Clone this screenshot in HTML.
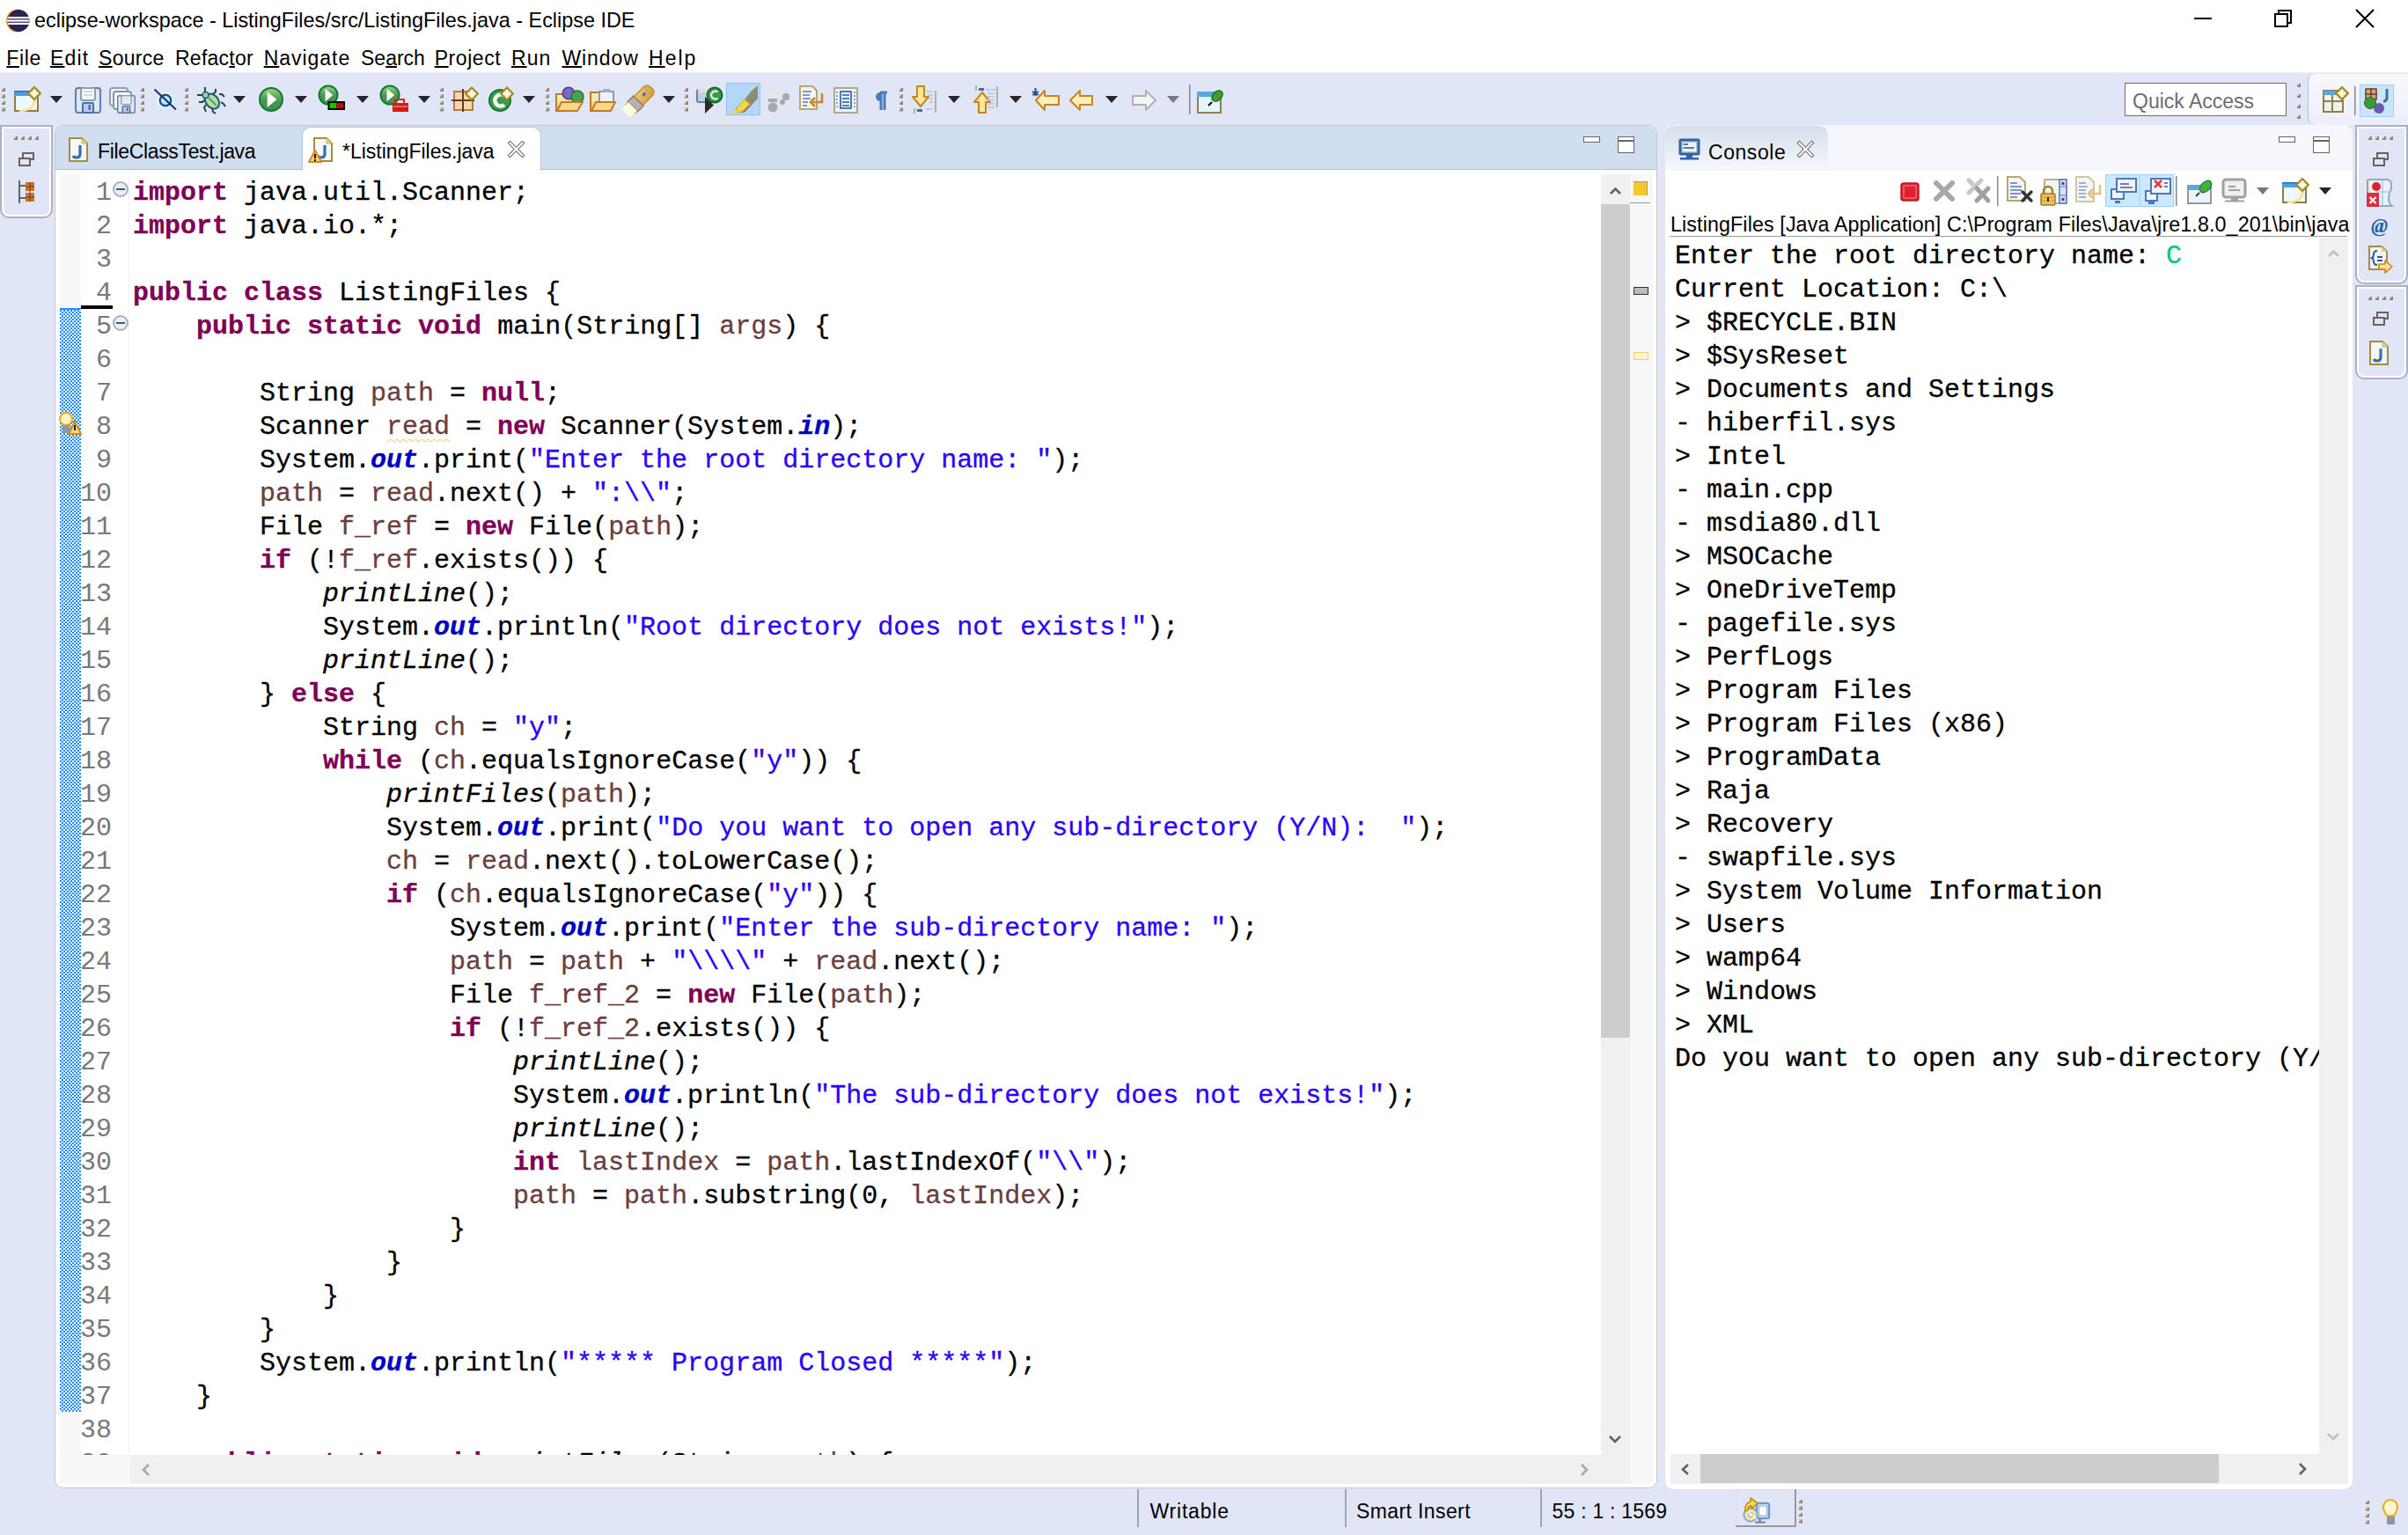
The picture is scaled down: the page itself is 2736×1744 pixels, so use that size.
<!DOCTYPE html>
<html><head><meta charset="utf-8">
<style>
*{margin:0;padding:0;box-sizing:border-box}
html,body{width:2736px;height:1744px;overflow:hidden;background:#e1e6f6;font-family:"Liberation Sans",sans-serif;color:#000}
.a{position:absolute}
.ui{font-family:"Liberation Sans",sans-serif;font-size:23px;line-height:28px;white-space:pre;position:absolute}
.cl{position:absolute;left:0;white-space:pre;font-family:"Liberation Mono",monospace;font-size:30px;line-height:38px;height:38px;color:#000;-webkit-text-stroke:0.3px currentColor}
.k{color:#7f0055;font-weight:bold}
.s{color:#2a00ff}
.f{color:#0000c0;font-weight:bold;font-style:italic}
.v{color:#6a3e3e}
i{font-style:italic}
.w{text-decoration:underline wavy #f4c82d;text-decoration-thickness:1px;text-underline-offset:5px}
.ln{position:absolute;right:0;white-space:pre;font-family:"Liberation Mono",monospace;font-size:30px;line-height:38px;color:#787878}
.drop{position:absolute;width:0;height:0;border-left:7px solid transparent;border-right:7px solid transparent;border-top:8px solid #222}
.dots{position:absolute;width:4px;height:26px;background:repeating-linear-gradient(#8a8372 0 4px,transparent 4px 8px)}
</style></head><body>

<div class="a" style="left:0;top:0;width:2736px;height:82px;background:#fff"></div>
<div class="a" style="left:0;top:82px;width:2736px;height:1px;background:#f0f0f0"></div>
<svg class="a" style="left:6px;top:10px" width="28" height="27" viewBox="0 0 28 27">
<circle cx="14" cy="13.5" r="13" fill="#f7941e"/><circle cx="15" cy="13.5" r="12.5" fill="#2c2255"/>
<rect x="3" y="9" width="24" height="2.2" fill="#fff"/><rect x="2" y="12.4" width="25" height="2.2" fill="#fff"/><rect x="3" y="15.8" width="24" height="2.2" fill="#fff"/>
</svg>
<div class="ui" style="left:39px;top:9px;font-size:23.4px">eclipse-workspace - ListingFiles/src/ListingFiles.java - Eclipse IDE</div>
<div class="a" style="left:2493px;top:20px;width:20px;height:2px;background:#000"></div>
<div class="a" style="left:2588px;top:11px;width:16px;height:16px;border:2px solid #000"></div>
<div class="a" style="left:2584px;top:15px;width:16px;height:16px;border:2px solid #000;background:#fff"></div>
<svg class="a" style="left:2676px;top:10px" width="22" height="22"><path d="M1 1L21 21M21 1L1 21" stroke="#000" stroke-width="2"/></svg>
<div class="ui" style="left:7.3px;top:52px;letter-spacing:0.67px"><span style="text-decoration:underline;text-underline-offset:1px;text-decoration-thickness:1.5px">F</span>ile</div>
<div class="ui" style="left:57.0px;top:52px;letter-spacing:1.20px"><span style="text-decoration:underline;text-underline-offset:1px;text-decoration-thickness:1.5px">E</span>dit</div>
<div class="ui" style="left:112.0px;top:52px;letter-spacing:0.28px"><span style="text-decoration:underline;text-underline-offset:1px;text-decoration-thickness:1.5px">S</span>ource</div>
<div class="ui" style="left:199.0px;top:52px;letter-spacing:0.24px">Refac<span style="text-decoration:underline;text-underline-offset:1px;text-decoration-thickness:1.5px">t</span>or</div>
<div class="ui" style="left:299.7px;top:52px;letter-spacing:0.97px"><span style="text-decoration:underline;text-underline-offset:1px;text-decoration-thickness:1.5px">N</span>avigate</div>
<div class="ui" style="left:410.0px;top:52px;letter-spacing:0.00px">Se<span style="text-decoration:underline;text-underline-offset:1px;text-decoration-thickness:1.5px">a</span>rch</div>
<div class="ui" style="left:493.7px;top:52px;letter-spacing:0.55px"><span style="text-decoration:underline;text-underline-offset:1px;text-decoration-thickness:1.5px">P</span>roject</div>
<div class="ui" style="left:581.0px;top:52px;letter-spacing:1.00px"><span style="text-decoration:underline;text-underline-offset:1px;text-decoration-thickness:1.5px">R</span>un</div>
<div class="ui" style="left:638.5px;top:52px;letter-spacing:0.90px"><span style="text-decoration:underline;text-underline-offset:1px;text-decoration-thickness:1.5px">W</span>indow</div>
<div class="ui" style="left:737.0px;top:52px;letter-spacing:2.00px"><span style="text-decoration:underline;text-underline-offset:1px;text-decoration-thickness:1.5px">H</span>elp</div>
<div class="a" style="left:62px;top:142px;width:1821px;height:1549px;background:#fff;border:1px solid #c6c6c6;border-radius:10px 10px 10px 10px"></div>
<div class="a" style="left:63px;top:143px;width:1819px;height:50px;background:#cfdff0;border-radius:9px 9px 0 0;border-bottom:1.5px solid #b3bccd"></div>
<div class="a" style="left:343px;top:144px;width:272px;height:50px;background:#fff;border-radius:10px 10px 0 0;border:1px solid #b8c6dc;border-bottom:none"></div>
<div class="ui" style="left:111px;top:158px;letter-spacing:-0.34px">FileClassTest.java</div>
<div class="ui" style="left:389px;top:158px">*ListingFiles.java</div>
<div class="a" style="left:68px;top:198px;width:24px;height:1455px;background:#f8f8f8"></div>
<div class="a" style="left:68px;top:350px;width:24px;height:1254px;background:conic-gradient(#1a8cff 25%,#fff 0 50%,#1a8cff 0 75%,#fff 0) 0 0/4px 4px"></div>
<div class="a" style="left:68px;top:350px;width:24px;height:2px;background:#1e90ff"></div>
<div class="a" style="left:92px;top:347px;width:36px;height:4px;background:#000"></div>
<div class="a" style="left:146px;top:198px;width:1px;height:1455px;background:#f2f2f2"></div>
<div class="a" style="left:92px;top:200px;width:35px;height:1453px;overflow:hidden"><div class="ln" style="top:0px">1</div><div class="ln" style="top:38px">2</div><div class="ln" style="top:76px">3</div><div class="ln" style="top:114px">4</div><div class="ln" style="top:152px">5</div><div class="ln" style="top:190px">6</div><div class="ln" style="top:228px">7</div><div class="ln" style="top:266px">8</div><div class="ln" style="top:304px">9</div><div class="ln" style="top:342px">10</div><div class="ln" style="top:380px">11</div><div class="ln" style="top:418px">12</div><div class="ln" style="top:456px">13</div><div class="ln" style="top:494px">14</div><div class="ln" style="top:532px">15</div><div class="ln" style="top:570px">16</div><div class="ln" style="top:608px">17</div><div class="ln" style="top:646px">18</div><div class="ln" style="top:684px">19</div><div class="ln" style="top:722px">20</div><div class="ln" style="top:760px">21</div><div class="ln" style="top:798px">22</div><div class="ln" style="top:836px">23</div><div class="ln" style="top:874px">24</div><div class="ln" style="top:912px">25</div><div class="ln" style="top:950px">26</div><div class="ln" style="top:988px">27</div><div class="ln" style="top:1026px">28</div><div class="ln" style="top:1064px">29</div><div class="ln" style="top:1102px">30</div><div class="ln" style="top:1140px">31</div><div class="ln" style="top:1178px">32</div><div class="ln" style="top:1216px">33</div><div class="ln" style="top:1254px">34</div><div class="ln" style="top:1292px">35</div><div class="ln" style="top:1330px">36</div><div class="ln" style="top:1368px">37</div><div class="ln" style="top:1406px">38</div><div class="ln" style="top:1444px">39</div></div>
<div class="a" style="left:151px;top:200px;width:1667px;height:1453px;overflow:hidden"><div class="cl" style="top:0px"><span class="k">import</span> java.util.Scanner;</div><div class="cl" style="top:38px"><span class="k">import</span> java.io.*;</div><div class="cl" style="top:76px"></div><div class="cl" style="top:114px"><span class="k">public</span> <span class="k">class</span> ListingFiles {</div><div class="cl" style="top:152px">    <span class="k">public</span> <span class="k">static</span> <span class="k">void</span> main(String[] <span class="v">args</span>) {</div><div class="cl" style="top:190px"></div><div class="cl" style="top:228px">        String <span class="v">path</span> = <span class="k">null</span>;</div><div class="cl" style="top:266px">        Scanner <span class="v w">read</span> = <span class="k">new</span> Scanner(System.<span class="f">in</span>);</div><div class="cl" style="top:304px">        System.<span class="f">out</span>.print(<span class="s">&quot;Enter the root directory name: &quot;</span>);</div><div class="cl" style="top:342px">        <span class="v">path</span> = <span class="v">read</span>.next() + <span class="s">&quot;:\\&quot;</span>;</div><div class="cl" style="top:380px">        File <span class="v">f_ref</span> = <span class="k">new</span> File(<span class="v">path</span>);</div><div class="cl" style="top:418px">        <span class="k">if</span> (!<span class="v">f_ref</span>.exists()) {</div><div class="cl" style="top:456px">            <i>printLine</i>();</div><div class="cl" style="top:494px">            System.<span class="f">out</span>.println(<span class="s">&quot;Root directory does not exists!&quot;</span>);</div><div class="cl" style="top:532px">            <i>printLine</i>();</div><div class="cl" style="top:570px">        } <span class="k">else</span> {</div><div class="cl" style="top:608px">            String <span class="v">ch</span> = <span class="s">&quot;y&quot;</span>;</div><div class="cl" style="top:646px">            <span class="k">while</span> (<span class="v">ch</span>.equalsIgnoreCase(<span class="s">&quot;y&quot;</span>)) {</div><div class="cl" style="top:684px">                <i>printFiles</i>(<span class="v">path</span>);</div><div class="cl" style="top:722px">                System.<span class="f">out</span>.print(<span class="s">&quot;Do you want to open any sub-directory (Y/N):  &quot;</span>);</div><div class="cl" style="top:760px">                <span class="v">ch</span> = <span class="v">read</span>.next().toLowerCase();</div><div class="cl" style="top:798px">                <span class="k">if</span> (<span class="v">ch</span>.equalsIgnoreCase(<span class="s">&quot;y&quot;</span>)) {</div><div class="cl" style="top:836px">                    System.<span class="f">out</span>.print(<span class="s">&quot;Enter the sub-directory name: &quot;</span>);</div><div class="cl" style="top:874px">                    <span class="v">path</span> = <span class="v">path</span> + <span class="s">&quot;\\\\&quot;</span> + <span class="v">read</span>.next();</div><div class="cl" style="top:912px">                    File <span class="v">f_ref_2</span> = <span class="k">new</span> File(<span class="v">path</span>);</div><div class="cl" style="top:950px">                    <span class="k">if</span> (!<span class="v">f_ref_2</span>.exists()) {</div><div class="cl" style="top:988px">                        <i>printLine</i>();</div><div class="cl" style="top:1026px">                        System.<span class="f">out</span>.println(<span class="s">&quot;The sub-directory does not exists!&quot;</span>);</div><div class="cl" style="top:1064px">                        <i>printLine</i>();</div><div class="cl" style="top:1102px">                        <span class="k">int</span> <span class="v">lastIndex</span> = <span class="v">path</span>.lastIndexOf(<span class="s">&quot;\\&quot;</span>);</div><div class="cl" style="top:1140px">                        <span class="v">path</span> = <span class="v">path</span>.substring(0, <span class="v">lastIndex</span>);</div><div class="cl" style="top:1178px">                    }</div><div class="cl" style="top:1216px">                }</div><div class="cl" style="top:1254px">            }</div><div class="cl" style="top:1292px">        }</div><div class="cl" style="top:1330px">        System.<span class="f">out</span>.println(<span class="s">&quot;***** Program Closed *****&quot;</span>);</div><div class="cl" style="top:1368px">    }</div><div class="cl" style="top:1406px"></div><div class="cl" style="top:1444px">    <span class="k">public</span> <span class="k">static</span> <span class="k">void</span> <i>printFiles</i>(String <span class="v">path</span>) {</div></div>
<div class="a" style="left:1819px;top:198px;width:33px;height:1455px;background:#f0f0f0"></div>
<div class="a" style="left:1819px;top:232px;width:33px;height:947px;background:#cdcdcd"></div>
<div class="a" style="left:1852px;top:198px;width:26px;height:1488px;background:#f7f7f7"></div>
<div class="a" style="left:1856px;top:206px;width:16px;height:16px;background:#f4c82d;border-top:1px solid #999;border-right:1px solid #999"></div>
<div class="a" style="left:1852px;top:230px;width:23px;height:1px;background:#999"></div>
<div class="a" style="left:1856px;top:326px;width:17px;height:9px;background:#bbb;border:1px solid #333"></div>
<div class="a" style="left:1856px;top:400px;width:17px;height:9px;background:#fcf1d3;border:1px solid #f5cf5c"></div>
<div class="a" style="left:68px;top:1653px;width:80px;height:33px;background:#f7f7f7"></div>
<div class="a" style="left:148px;top:1653px;width:1671px;height:33px;background:#f0f0f0"></div>
<div class="a" style="left:1819px;top:1653px;width:33px;height:33px;background:#f0f0f0"></div>
<div class="a" style="left:1892px;top:142px;width:781px;height:1550px;background:#fff;border-radius:10px"></div>
<div class="a" style="left:1892px;top:142px;width:781px;height:52px;background:#f5f7fc;border-radius:10px 10px 0 0"></div>
<div class="a" style="left:1892px;top:143px;width:185px;height:51px;background:linear-gradient(#d5dfeb,#f6f8fc);border-radius:10px 10px 0 0"></div>
<div class="ui" style="left:1941px;top:158.5px;letter-spacing:0.55px">Console</div>
<div class="ui" style="left:1898px;top:241px;font-size:23.3px;letter-spacing:0.1px">ListingFiles [Java Application] C:\Program Files\Java\jre1.8.0_201\bin\java</div>
<div class="a" style="left:1897px;top:268px;width:770px;height:1px;background:#a0a0a0"></div>
<div class="a" style="left:1903px;top:272px;width:732px;height:1380px;overflow:hidden"><div class="cl" style="top:0px">Enter the root directory name: <span style="color:#00c87d">C</span></div><div class="cl" style="top:38px">Current Location: C:\</div><div class="cl" style="top:76px">&gt; $RECYCLE.BIN</div><div class="cl" style="top:114px">&gt; $SysReset</div><div class="cl" style="top:152px">&gt; Documents and Settings</div><div class="cl" style="top:190px">- hiberfil.sys</div><div class="cl" style="top:228px">&gt; Intel</div><div class="cl" style="top:266px">- main.cpp</div><div class="cl" style="top:304px">- msdia80.dll</div><div class="cl" style="top:342px">&gt; MSOCache</div><div class="cl" style="top:380px">&gt; OneDriveTemp</div><div class="cl" style="top:418px">- pagefile.sys</div><div class="cl" style="top:456px">&gt; PerfLogs</div><div class="cl" style="top:494px">&gt; Program Files</div><div class="cl" style="top:532px">&gt; Program Files (x86)</div><div class="cl" style="top:570px">&gt; ProgramData</div><div class="cl" style="top:608px">&gt; Raja</div><div class="cl" style="top:646px">&gt; Recovery</div><div class="cl" style="top:684px">- swapfile.sys</div><div class="cl" style="top:722px">&gt; System Volume Information</div><div class="cl" style="top:760px">&gt; Users</div><div class="cl" style="top:798px">&gt; wamp64</div><div class="cl" style="top:836px">&gt; Windows</div><div class="cl" style="top:874px">&gt; XML</div><div class="cl" style="top:912px">Do you want to open any sub-directory (Y/N):  </div></div>
<div class="a" style="left:2635px;top:270px;width:33px;height:1383px;background:#f0f0f0"></div>
<div class="a" style="left:1898px;top:1652px;width:770px;height:34px;background:#f0f0f0"></div>
<div class="a" style="left:1932px;top:1652px;width:589px;height:33px;background:#cdcdcd"></div>
<div class="a" style="left:0;top:142px;width:60px;height:106px;border:2px solid #a9b1c6;border-left-width:2px;border-radius:0 0 10px 10px;background:#e1e6f6;box-shadow:inset 0 0 0 2px #fff"></div>
<div class="a" style="left:2676px;top:142px;width:60px;height:181px;border:2px solid #a9b1c6;border-radius:0 0 10px 10px;box-shadow:inset 0 0 0 2px #fff"></div>
<div class="a" style="left:2676px;top:324px;width:60px;height:107px;border:2px solid #a9b1c6;border-radius:0 0 10px 10px;box-shadow:inset 0 0 0 2px #fff"></div>
<div class="a" style="left:2414px;top:94px;width:184px;height:38px;background:#fff;border:1.5px solid #6e6e6e"></div>
<div class="a" style="left:2622px;top:84px;width:120px;height:58px;background:linear-gradient(#f6f8fd,#eceffa);border-left:1.5px solid #b8c0d2;border-radius:8px 0 0 8px"></div>
<div class="ui" style="left:2423px;top:101px;color:#6d6d6d">Quick Access</div>
<div class="a" style="left:1292px;top:1692px;width:2px;height:43px;background:#a0a4b0"></div>
<div class="a" style="left:1528px;top:1692px;width:2px;height:43px;background:#a0a4b0"></div>
<div class="a" style="left:1750px;top:1692px;width:2px;height:43px;background:#a0a4b0"></div>
<div class="ui" style="left:1306.5px;top:1702.5px;letter-spacing:0.79px">Writable</div>
<div class="ui" style="left:1541px;top:1702.5px;letter-spacing:0.39px">Smart Insert</div>
<div class="ui" style="left:1763.5px;top:1702.5px;letter-spacing:0.23px">55 : 1 : 1569</div>
<div class="a" style="left:1799px;top:155px;width:19px;height:7px;border:1.5px solid #666;background:#fff"></div>
<div class="a" style="left:1838px;top:155px;width:19px;height:19px;border:1.5px solid #666;background:#fff"></div>
<div class="a" style="left:1838px;top:159px;width:19px;height:1.5px;background:#666"></div>
<div class="a" style="left:2589px;top:155px;width:19px;height:7px;border:1.5px solid #666;background:#fff"></div>
<div class="a" style="left:2628px;top:155px;width:19px;height:19px;border:1.5px solid #666;background:#fff"></div>
<div class="a" style="left:2628px;top:159px;width:19px;height:1.5px;background:#666"></div>
<svg class="a" style="left:0;top:0" width="2736" height="1744"><defs>
<linearGradient id="gplay" x1="0" y1="0" x2="0" y2="1"><stop offset="0" stop-color="#9ad77f"/><stop offset="0.5" stop-color="#4a9a52"/><stop offset="1" stop-color="#3d8f4a"/></linearGradient>
<linearGradient id="fold" x1="0" y1="0" x2="0" y2="1"><stop offset="0" stop-color="#fff3c4"/><stop offset="1" stop-color="#f2c66a"/></linearGradient>
<linearGradient id="pen" x1="0" y1="0" x2="1" y2="1"><stop offset="0" stop-color="#f6d68a"/><stop offset="1" stop-color="#d29a3a"/></linearGradient>
</defs>
<rect x="2.0" y="100.0" width="4" height="4" fill="#8d8672"/><rect x="2.0" y="100.0" width="2" height="2" fill="#d8d2c0"/><rect x="2.0" y="107.5" width="4" height="4" fill="#8d8672"/><rect x="2.0" y="107.5" width="2" height="2" fill="#d8d2c0"/><rect x="2.0" y="115.0" width="4" height="4" fill="#8d8672"/><rect x="2.0" y="115.0" width="2" height="2" fill="#d8d2c0"/><rect x="2.0" y="122.5" width="4" height="4" fill="#8d8672"/><rect x="2.0" y="122.5" width="2" height="2" fill="#d8d2c0"/>
<rect x="17" y="104" width="26" height="22" fill="#eef8ff" stroke="#8f7d48" stroke-width="2"/><rect x="16" y="103" width="28" height="6" fill="#4aa3df"/><rect x="16" y="103" width="28" height="1.5" fill="#2f6fb5"/><path d="M22 126Q41 125 39 111" stroke="#f7e39a" stroke-width="3" fill="none"/><path d="M39 99L46 106L39 113L32 106Z" fill="#f3e3a8" stroke="#a4861f" stroke-width="2"/><path d="M39 102V110M35 106H43" stroke="#fff" stroke-width="2"/>
<path d="M57.0 109.0L71.0 109.0L64.0 117.0Z" fill="#262626"/>
<g transform="translate(85,99) scale(1.0)"><rect x="1" y="1" width="28" height="28" rx="3" fill="#dfe8f2" stroke="#5b7fb0" stroke-width="2"/><rect x="7" y="1" width="16" height="14" rx="2" fill="#f4f7fa" stroke="#8fa0a8" stroke-width="2"/><path d="M10 5H20M10 9H20" stroke="#c8d2d8" stroke-width="1.5"/><rect x="9" y="18" width="12" height="11" rx="1.5" fill="#b8cde8" stroke="#4b6fa8" stroke-width="2"/><rect x="15.5" y="20" width="2.5" height="6" fill="#4b6fa8"/></g>
<g transform="translate(124,99)"><rect x="1" y="1" width="20" height="20" rx="3" fill="#f4f7fa" stroke="#8fa0b8" stroke-width="2"/><rect x="5" y="5" width="20" height="20" rx="3" fill="#f4f7fa" stroke="#7f95b5" stroke-width="2"/></g>
<g transform="translate(133,108) scale(0.7)"><rect x="1" y="1" width="28" height="28" rx="3" fill="#dfe8f2" stroke="#5b7fb0" stroke-width="2"/><rect x="7" y="1" width="16" height="14" rx="2" fill="#f4f7fa" stroke="#8fa0a8" stroke-width="2"/><path d="M10 5H20M10 9H20" stroke="#c8d2d8" stroke-width="1.5"/><rect x="9" y="18" width="12" height="11" rx="1.5" fill="#b8cde8" stroke="#4b6fa8" stroke-width="2"/><rect x="15.5" y="20" width="2.5" height="6" fill="#4b6fa8"/></g>
<rect x="160.0" y="100.0" width="4" height="4" fill="#8d8672"/><rect x="160.0" y="100.0" width="2" height="2" fill="#d8d2c0"/><rect x="160.0" y="107.5" width="4" height="4" fill="#8d8672"/><rect x="160.0" y="107.5" width="2" height="2" fill="#d8d2c0"/><rect x="160.0" y="115.0" width="4" height="4" fill="#8d8672"/><rect x="160.0" y="115.0" width="2" height="2" fill="#d8d2c0"/><rect x="160.0" y="122.5" width="4" height="4" fill="#8d8672"/><rect x="160.0" y="122.5" width="2" height="2" fill="#d8d2c0"/>
<circle cx="188" cy="114" r="9" fill="#fff"/><circle cx="188" cy="114" r="6.3" fill="#c6e2ef" stroke="#0b5a8c" stroke-width="2.4"/><path d="M175.5 101.5L200 124.5" stroke="#1b2a80" stroke-width="2"/>
<rect x="210.0" y="100.0" width="4" height="4" fill="#8d8672"/><rect x="210.0" y="100.0" width="2" height="2" fill="#d8d2c0"/><rect x="210.0" y="107.5" width="4" height="4" fill="#8d8672"/><rect x="210.0" y="107.5" width="2" height="2" fill="#d8d2c0"/><rect x="210.0" y="115.0" width="4" height="4" fill="#8d8672"/><rect x="210.0" y="115.0" width="2" height="2" fill="#d8d2c0"/><rect x="210.0" y="122.5" width="4" height="4" fill="#8d8672"/><rect x="210.0" y="122.5" width="2" height="2" fill="#d8d2c0"/>
<g stroke="#1f4a3b" stroke-width="2" fill="none"><path d="M233 99V106M245 101V104L241 108M224 108H232M226 116L230 116L233 113M249 107L252 107L255 110M251 116L254 118L256 121M234 119L232 122L234 127M241 123L242 127L245 129"/></g><ellipse cx="241" cy="115" rx="7" ry="9.5" transform="rotate(-40 241 115)" fill="#b8dca8" stroke="#1b5e6e" stroke-width="2"/><circle cx="233.5" cy="108" r="3.5" fill="#a8d0b0" stroke="#1b5e6e" stroke-width="1.6"/><path d="M237 111L246 120" stroke="#5aa65a" stroke-width="2"/>
<path d="M265.0 109.0L279.0 109.0L272.0 117.0Z" fill="#262626"/>
<circle cx="308" cy="113" r="13" fill="url(#gplay)" stroke="#0e7a32" stroke-width="2"/><path d="M303.71 104.16L303.71 122.1L314.5 113Z" fill="#fff"/>
<path d="M335.0 109.0L349.0 109.0L342.0 117.0Z" fill="#262626"/>
<circle cx="373" cy="108" r="10.5" fill="url(#gplay)" stroke="#0e7a32" stroke-width="2"/><path d="M369.535 100.86L369.535 115.35L378.25 108Z" fill="#fff"/>
<rect x="372.5" y="115" width="19.5" height="10" fill="#000"/><rect x="374.5" y="117" width="8" height="6" fill="#00c800"/><rect x="382.5" y="117" width="7.5" height="6" fill="#d00000"/>
<path d="M405.0 109.0L419.0 109.0L412.0 117.0Z" fill="#262626"/>
<circle cx="443" cy="108" r="10.5" fill="url(#gplay)" stroke="#0e7a32" stroke-width="2"/><path d="M439.535 100.86L439.535 115.35L448.25 108Z" fill="#fff"/>
<rect x="449" y="113" width="10" height="5" fill="none" stroke="#e82020" stroke-width="2"/><rect x="446" y="117" width="18" height="10" fill="#d81818"/><path d="M447 121H463" stroke="#f08080" stroke-width="1.5"/>
<path d="M475.0 109.0L489.0 109.0L482.0 117.0Z" fill="#262626"/>
<rect x="500.0" y="100.0" width="4" height="4" fill="#8d8672"/><rect x="500.0" y="100.0" width="2" height="2" fill="#d8d2c0"/><rect x="500.0" y="107.5" width="4" height="4" fill="#8d8672"/><rect x="500.0" y="107.5" width="2" height="2" fill="#d8d2c0"/><rect x="500.0" y="115.0" width="4" height="4" fill="#8d8672"/><rect x="500.0" y="115.0" width="2" height="2" fill="#d8d2c0"/><rect x="500.0" y="122.5" width="4" height="4" fill="#8d8672"/><rect x="500.0" y="122.5" width="2" height="2" fill="#d8d2c0"/>
<rect x="516" y="104" width="21" height="21" fill="#f2dba6" stroke="#b47a52" stroke-width="2"/><path d="M526 101V127M513 114H539" stroke="#6a3a28" stroke-width="2"/>
<path d="M536 99.5L543 106.5L536 113.5L529 106.5Z" fill="#f3e3a8" stroke="#a4861f" stroke-width="2"/><path d="M536 102.5V110.5M532 106.5H540" stroke="#fff" stroke-width="2"/>
<circle cx="568" cy="114" r="12" fill="#3a9a4a" stroke="#137a30" stroke-width="2"/><path d="M573 109A6.5 6.5 0 1 0 573 119" stroke="#fff" stroke-width="4.5" fill="none"/>
<path d="M576 99.5L583 106.5L576 113.5L569 106.5Z" fill="#f3e3a8" stroke="#a4861f" stroke-width="2"/><path d="M576 102.5V110.5M572 106.5H580" stroke="#fff" stroke-width="2"/>
<path d="M594.0 109.0L608.0 109.0L601.0 117.0Z" fill="#262626"/>
<rect x="620.0" y="100.0" width="4" height="4" fill="#8d8672"/><rect x="620.0" y="100.0" width="2" height="2" fill="#d8d2c0"/><rect x="620.0" y="107.5" width="4" height="4" fill="#8d8672"/><rect x="620.0" y="107.5" width="2" height="2" fill="#d8d2c0"/><rect x="620.0" y="115.0" width="4" height="4" fill="#8d8672"/><rect x="620.0" y="115.0" width="2" height="2" fill="#d8d2c0"/><rect x="620.0" y="122.5" width="4" height="4" fill="#8d8672"/><rect x="620.0" y="122.5" width="2" height="2" fill="#d8d2c0"/>
<path d="M632 107H642L644 110H652V126H632Z" fill="url(#fold)" stroke="#c07a28" stroke-width="2"/>
<circle cx="646" cy="106" r="6.8" fill="#7a6ac0" stroke="#4a3a98" stroke-width="1.5"/><circle cx="656" cy="110" r="7" fill="#4aa050" stroke="#1a7a2a" stroke-width="1.5"/>
<path d="M633 126L638 116H662L656 126Z" fill="#f8d98a" stroke="#c07a28" stroke-width="2"/>
<path d="M671 105H681L683 108H690V126H671Z" fill="url(#fold)" stroke="#c07a28" stroke-width="2"/><rect x="681" y="104" width="16" height="13" fill="#eef2fa" stroke="#8a9ab0" stroke-width="2"/><rect x="685" y="101" width="8" height="4" fill="#9ab0c8"/><path d="M672 126L677 116H699L694 126Z" fill="#f8d98a" stroke="#c07a28" stroke-width="2"/>
<g transform="rotate(-45 726 114)"><rect x="708" y="107" width="38" height="14" rx="5" fill="url(#pen)" stroke="#c88a2a" stroke-width="1.5"/><rect x="740" y="109" width="5" height="10" rx="2" fill="none" stroke="#c8a060" stroke-width="1.5"/><rect x="716" y="106" width="9" height="16" fill="#b8b0b8" stroke="#9a7a48" stroke-width="1.5"/><rect x="705" y="107" width="11" height="14" fill="#fffbe0"/><rect x="733" y="112" width="4" height="2.5" fill="#3060b0"/></g>
<path d="M753.0 109.0L767.0 109.0L760.0 117.0Z" fill="#262626"/>
<rect x="778.0" y="100.0" width="4" height="4" fill="#8d8672"/><rect x="778.0" y="100.0" width="2" height="2" fill="#d8d2c0"/><rect x="778.0" y="107.5" width="4" height="4" fill="#8d8672"/><rect x="778.0" y="107.5" width="2" height="2" fill="#d8d2c0"/><rect x="778.0" y="115.0" width="4" height="4" fill="#8d8672"/><rect x="778.0" y="115.0" width="2" height="2" fill="#d8d2c0"/><rect x="778.0" y="122.5" width="4" height="4" fill="#8d8672"/><rect x="778.0" y="122.5" width="2" height="2" fill="#d8d2c0"/>
<rect x="792" y="102" width="15" height="14" rx="2" fill="#b8d4ec" stroke="#7a7aa0" stroke-width="2"/><rect x="793" y="101" width="13" height="4" fill="#f0d8c8"/><path d="M801 110V129L811 119.5Z" fill="#2a2a2a"/><circle cx="812" cy="108" r="8.5" fill="#3a9a4a" stroke="#0e6a28" stroke-width="2"/><path d="M815.5 104.5A4.5 4.5 0 1 0 815.5 111.5" stroke="#fff" stroke-width="2.2" fill="none"/>
<rect x="825.5" y="94.5" width="38" height="36" fill="#b3d7f7" stroke="#8cc4f5" stroke-width="1"/>
<path d="M838 124L853 104L861 97V112L846 128H838Z" fill="#8f8a72"/><path d="M837 123L846 113L852 118L843 127Q838 129 836 127Z" fill="#f3d648" stroke="#c9a820" stroke-width="1"/><path d="M829 127H838" stroke="#f3d648" stroke-width="2"/>
<g fill="#a8a8a8"><rect x="872" y="102" width="11" height="8" rx="3" fill="#e8e8e8"/><circle cx="878" cy="122" r="5.5"/><rect x="873" y="112" width="10" height="4"/><circle cx="893" cy="110" r="4"/><circle cx="889" cy="116" r="3"/></g>
<path d="M909 98H923L928 103V124H909Z" fill="#f2f5fb" stroke="#b8a870" stroke-width="2"/><path d="M912 104H922M912 108H920M912 112H921M912 116H918M912 120H917" stroke="#5a78b0" stroke-width="1.6"/><path d="M934 106V116H924" stroke="#c8841e" stroke-width="2.5" fill="none"/><path d="M926 111L921 116L926 121" stroke="#c8841e" stroke-width="2.5" fill="none"/>
<rect x="948" y="100" width="26" height="28" fill="#eef2fa" stroke="#b0a888" stroke-width="2"/><rect x="955" y="104" width="12" height="19" fill="none" stroke="#2a5aa0" stroke-width="1.6"/><path d="M957 108H965M957 112H965M957 116H965M957 120H965" stroke="#2a5aa0" stroke-width="1.4"/><path d="M951 104V124M971 104V124" stroke="#6a88b8" stroke-width="1.5" stroke-dasharray="2 2"/>
<path d="M1000 105H1008M1001 105V125M1005 105V125" stroke="#4a7ab8" stroke-width="3"/><path d="M1000 105A5 5 0 0 0 1000 115Z" fill="#4a7ab8"/>
<rect x="1022.0" y="100.0" width="4" height="4" fill="#8d8672"/><rect x="1022.0" y="100.0" width="2" height="2" fill="#d8d2c0"/><rect x="1022.0" y="107.5" width="4" height="4" fill="#8d8672"/><rect x="1022.0" y="107.5" width="2" height="2" fill="#d8d2c0"/><rect x="1022.0" y="115.0" width="4" height="4" fill="#8d8672"/><rect x="1022.0" y="115.0" width="2" height="2" fill="#d8d2c0"/><rect x="1022.0" y="122.5" width="4" height="4" fill="#8d8672"/><rect x="1022.0" y="122.5" width="2" height="2" fill="#d8d2c0"/>
<path d="M1042 98H1050V110H1055L1046 121L1037 110H1042Z" fill="#fde79a" stroke="#c8841e" stroke-width="2" stroke-linejoin="round"/><path d="M1052 104H1060M1054 108H1060M1054 112H1060M1056 116H1060M1052 124H1060" stroke="#b8c4d8" stroke-width="1.5"/><path d="M1063 103V128M1039 123V129" stroke="#a0a890" stroke-width="1.6"/><rect x="1042" y="124" width="6" height="3" fill="#4a6aa8"/>
<path d="M1077.0 109.0L1091.0 109.0L1084.0 117.0Z" fill="#262626"/>
<path d="M1112 128H1120V116H1125L1116 105L1107 116H1112Z" fill="#fde79a" stroke="#c8841e" stroke-width="2" stroke-linejoin="round"/><path d="M1120 102H1132M1122 106H1130M1122 110H1130M1122 114H1130M1122 118H1130M1122 122H1130" stroke="#b8c4d8" stroke-width="1.5"/><path d="M1133 98V122M1109 97V103" stroke="#a0a890" stroke-width="1.6"/><rect x="1112" y="100" width="6" height="3" fill="#4a6aa8"/>
<path d="M1147.0 109.0L1161.0 109.0L1154.0 117.0Z" fill="#262626"/>
<path d="M1177 114L1187 103V109H1203V119H1187V125Z" fill="#fef0b8" stroke="#c8841e" stroke-width="2" stroke-linejoin="round"/><path d="M1173 104L1180 108M1176.5 100V109M1173 108L1180 104" stroke="#2a4a88" stroke-width="2"/>
<path d="M1216 114L1227 103V109H1241V119H1227V125Z" fill="#fef0b8" stroke="#c8841e" stroke-width="2" stroke-linejoin="round"/>
<path d="M1256.0 109.0L1270.0 109.0L1263.0 117.0Z" fill="#262626"/>
<path d="M1313 114L1302 103V109H1287V119H1302V125Z" fill="#f4f4f4" stroke="#b0b0b0" stroke-width="2" stroke-linejoin="round"/>
<path d="M1326.0 109.0L1340.0 109.0L1333.0 117.0Z" fill="#7a7a7a"/>
<rect x="1351" y="96" width="1.5" height="34" fill="#888"/>
<rect x="1361" y="105" width="26" height="23" fill="#e4f6fc" stroke="#8f7d55" stroke-width="2"/><rect x="1360" y="104" width="22" height="6" fill="#5aa8e0"/><path d="M1377 116L1373 120" stroke="#000" stroke-width="2"/><ellipse cx="1383" cy="109" rx="5" ry="7" transform="rotate(45 1383 109)" fill="#4a9a2a" stroke="#0e7a30" stroke-width="1.5"/>
<rect x="2610.0" y="95.0" width="4" height="4" fill="#8d8672"/><rect x="2610.0" y="95.0" width="2" height="2" fill="#d8d2c0"/><rect x="2610.0" y="107.0" width="4" height="4" fill="#8d8672"/><rect x="2610.0" y="107.0" width="2" height="2" fill="#d8d2c0"/><rect x="2610.0" y="119.0" width="4" height="4" fill="#8d8672"/><rect x="2610.0" y="119.0" width="2" height="2" fill="#d8d2c0"/><rect x="2610.0" y="131.0" width="4" height="4" fill="#8d8672"/><rect x="2610.0" y="131.0" width="2" height="2" fill="#d8d2c0"/>
<rect x="2640" y="103" width="22" height="24" fill="#f0f4e8" stroke="#8f7d55" stroke-width="2"/><rect x="2640" y="103" width="18" height="5" fill="#5aa8e0"/><path d="M2640 115H2662M2650 108V127" stroke="#8f7d55" stroke-width="2"/>
<path d="M2661 99L2668 106L2661 113L2654 106Z" fill="#f3e3a8" stroke="#a4861f" stroke-width="2"/><path d="M2661 102V110M2657 106H2665" stroke="#fff" stroke-width="2"/>
<rect x="2675" y="98" width="1.5" height="33" fill="#888"/>
<rect x="2681.5" y="96.5" width="38" height="36" fill="#cce4f7" stroke="#99d1ff" stroke-width="1"/>
<rect x="2688" y="101" width="12" height="12" fill="#d8a878" stroke="#6a3a28" stroke-width="1.5"/><path d="M2694 100V114M2687 107H2701" stroke="#6a3a28" stroke-width="1.5"/><path d="M2712 101V111Q2712 115 2708 115" stroke="#3a6ea5" stroke-width="3" fill="none"/><circle cx="2703" cy="123" r="6" fill="#6a5ab0"/><circle cx="2693" cy="117" r="6.5" fill="#3a9a3a" stroke="#1a6a2a" stroke-width="1"/>
<g transform="translate(78,156)"><path d="M1 1H15L21 7V27H1Z" fill="#f4f7fb" stroke="#a78c3c" stroke-width="2"/><path d="M15 1V7H21" fill="#e8d28a" stroke="#c8b060" stroke-width="1"/><path d="M13 9V19Q13 23 9 23Q6 23 5 21" stroke="#3a6ea5" stroke-width="3.2" fill="none"/></g>
<g transform="translate(356,156)"><path d="M1 1H15L21 7V27H1Z" fill="#f4f7fb" stroke="#a78c3c" stroke-width="2"/><path d="M15 1V7H21" fill="#e8d28a" stroke="#c8b060" stroke-width="1"/><path d="M13 9V19Q13 23 9 23Q6 23 5 21" stroke="#3a6ea5" stroke-width="3.2" fill="none"/></g><path d="M351 184L358 171L365 184Z" fill="#f8d88a" stroke="#d38a1a" stroke-width="2" stroke-linejoin="round"/><path d="M358 175V180" stroke="#2a1a00" stroke-width="2.2"/><rect x="356.9" y="181" width="2.2" height="2.2" fill="#2a1a00"/>
<path d="M579.5 162.5L593.5 176.5M593.5 162.5L579.5 176.5" stroke="#6a6a6a" stroke-width="4.2" stroke-linecap="square"/><path d="M579.5 162.5L593.5 176.5M593.5 162.5L579.5 176.5" stroke="#fff" stroke-width="2.2" stroke-linecap="square"/>
<circle cx="137" cy="215" r="8" fill="#e9eef5" stroke="#a3b0c2" stroke-width="2"/><path d="M132 215H142" stroke="#4b5468" stroke-width="2"/>
<circle cx="137" cy="367" r="8" fill="#e9eef5" stroke="#a3b0c2" stroke-width="2"/><path d="M132 367H142" stroke="#4b5468" stroke-width="2"/>
<circle cx="75" cy="476" r="7" fill="#fdf3c0" stroke="#f0a81e" stroke-width="2"/><rect x="71" y="483" width="8" height="9" fill="#8898b0"/><path d="M85 479L92 493H78Z" fill="#f8d88a" stroke="#d38a1a" stroke-width="2" stroke-linejoin="round"/><path d="M85 483V489" stroke="#3a1a00" stroke-width="2"/>
<path d="M1830 220L1835.5 214.5L1841 220" stroke="#606060" stroke-width="2.5" fill="none"/>
<path d="M1829 1632L1835 1638L1841 1632" stroke="#606060" stroke-width="2.5" fill="none"/>
<path d="M169 1664L163 1670L169 1676" stroke="#a8a8a8" stroke-width="2.5" fill="none"/>
<path d="M1797 1664L1803 1670L1797 1676" stroke="#a8a8a8" stroke-width="2.5" fill="none"/>
<rect x="1907.5" y="157.5" width="24" height="19" rx="2" fill="#2f62ac"/><rect x="1910" y="160" width="19" height="14" fill="#8a96a8"/><rect x="1911.5" y="161.5" width="16" height="11" fill="#eaf6fc"/><path d="M1912.5 164H1918M1912.5 168H1925" stroke="#3a4a8a" stroke-width="1.5"/><rect x="1916" y="176" width="7" height="3" fill="#2f62ac"/><rect x="1909" y="179" width="21" height="2.5" fill="#2f62ac"/>
<path d="M2044.5 162.5L2058.5 176.5M2058.5 162.5L2044.5 176.5" stroke="#6a6a6a" stroke-width="4.2" stroke-linecap="square"/><path d="M2044.5 162.5L2058.5 176.5M2058.5 162.5L2044.5 176.5" stroke="#fff" stroke-width="2.2" stroke-linecap="square"/>
<rect x="2160" y="208" width="20" height="20" rx="3" fill="#e0202e" stroke="#b51a24" stroke-width="1.5"/><rect x="2163" y="211" width="14" height="14" fill="none" stroke="#f08890" stroke-width="1"/>
<path d="M2200 208L2218 226M2218 208L2200 226" stroke="#a8a8a8" stroke-width="6" stroke-linecap="round"/>
<path d="M2237 205L2251 219M2251 205L2237 219" stroke="#c8c8c8" stroke-width="5" stroke-linecap="round"/><path d="M2246 214L2259 228M2259 214L2246 228" stroke="#a0a0a0" stroke-width="5" stroke-linecap="round"/>
<rect x="2269" y="200" width="1.5" height="34" fill="#888"/>
<path d="M2281 201H2295L2301 207V228H2281Z" fill="#f2f5fb" stroke="#b8a870" stroke-width="2"/><path d="M2284 208H2292M2284 212H2297M2284 216H2297M2284 220H2296M2284 224H2292" stroke="#5a78b0" stroke-width="1.6"/><path d="M2298 218L2308 228M2308 218L2298 228" stroke="#333" stroke-width="3.5" stroke-linecap="round"/>
<rect x="2323" y="204" width="25" height="27" fill="#eef6fc" stroke="#a8966a" stroke-width="1.5"/><rect x="2340" y="204" width="8" height="27" fill="#d8e2f0" stroke="#5a7ab0" stroke-width="1.5"/><rect x="2342.5" y="207" width="3" height="3" fill="#2a4a88"/><rect x="2342.5" y="225" width="3" height="3" fill="#2a4a88"/><path d="M2340 212H2348M2340 222H2348" stroke="#5a7ab0" stroke-width="1.2"/><path d="M2322 221V217A5 5 0 0 1 2332 217V221" stroke="#a8841e" stroke-width="2.5" fill="none"/><rect x="2319" y="220" width="16" height="13" rx="1.5" fill="#e8c060" stroke="#a87a1e" stroke-width="1.5"/><path d="M2320 224H2334M2320 228H2334" stroke="#c8a040" stroke-width="1"/><rect x="2326" y="224" width="2" height="5" fill="#3a2a10"/>
<path d="M2359 201H2373L2379 207V229H2359Z" fill="#f2f5fb" stroke="#d0c8a0" stroke-width="2"/><path d="M2362 208H2370M2362 212H2372M2362 216H2370M2362 220H2370M2362 224H2370" stroke="#8a9ac0" stroke-width="1.6"/><path d="M2386 210V220H2376" stroke="#e8c070" stroke-width="2.5" fill="none"/><path d="M2378 215L2373 220L2378 225" stroke="#e8c070" stroke-width="2.5" fill="none"/>
<rect x="2392.5" y="198.5" width="77" height="36" fill="#cce8fc" stroke="#99d1ff" stroke-width="1"/><rect x="2430.5" y="199" width="1" height="35" fill="#99d1ff"/>
<rect x="2399" y="215" width="14" height="11" fill="#eef4fc" stroke="#4a78b8" stroke-width="2"/><rect x="2403" y="228" width="6" height="3" fill="#4a78b8"/><rect x="2405" y="203" width="22" height="15" fill="#eef4fc" stroke="#4a78b8" stroke-width="2"/><path d="M2409 209H2419M2409 213H2423" stroke="#4a5a9a" stroke-width="1.5"/>
<rect x="2438" y="217" width="13" height="11" fill="#eef4fc" stroke="#4a78b8" stroke-width="2"/><rect x="2441" y="229" width="7" height="3" fill="#4a78b8"/><rect x="2444" y="203" width="22" height="17" fill="#eef4fc" stroke="#4a78b8" stroke-width="2"/><path d="M2448 205L2456 213M2456 205L2448 213" stroke="#e83838" stroke-width="2.5"/><path d="M2459 208H2463M2459 212H2463" stroke="#4a5a9a" stroke-width="1.5"/>
<rect x="2472" y="200" width="1.5" height="34" fill="#888"/>
<rect x="2486" y="211" width="26" height="20" fill="#eef6fc" stroke="#8f97a5" stroke-width="2"/><rect x="2486" y="211" width="20" height="5" fill="#5aa8e0"/><path d="M2499 219L2495 223" stroke="#2a3a78" stroke-width="2"/><ellipse cx="2506" cy="212" rx="5" ry="8" transform="rotate(45 2506 212)" fill="#4aac3a" stroke="#1a8a3a" stroke-width="1.5"/>
<rect x="2526" y="204" width="25" height="20" rx="3" fill="#f0f0f0" stroke="#a0a0a0" stroke-width="3"/><path d="M2532 212H2540M2532 216H2545" stroke="#a0a0a0" stroke-width="2"/><rect x="2535" y="224" width="8" height="4" fill="#a0a0a0"/><rect x="2528" y="227.5" width="22" height="2" fill="#a0a0a0"/>
<path d="M2564.0 213.0L2578.0 213.0L2571.0 221.0Z" fill="#787878"/>
<rect x="2594" y="208" width="26" height="22" fill="#eef8ff" stroke="#8f7d48" stroke-width="2"/><rect x="2593" y="207" width="28" height="6" fill="#4aa3df"/><rect x="2593" y="207" width="28" height="1.5" fill="#2f6fb5"/><path d="M2599 230Q2618 229 2616 215" stroke="#f7e39a" stroke-width="3" fill="none"/><path d="M2616 203L2623 210L2616 217L2609 210Z" fill="#f3e3a8" stroke="#a4861f" stroke-width="2"/><path d="M2616 206V214M2612 210H2620" stroke="#fff" stroke-width="2"/>
<path d="M2635.0 213.0L2649.0 213.0L2642.0 221.0Z" fill="#262626"/>
<path d="M2646 291L2651.5 285.5L2657 291" stroke="#c0c0c0" stroke-width="2.5" fill="none"/>
<path d="M2645 1629L2651 1635L2657 1629" stroke="#c0c0c0" stroke-width="2.5" fill="none"/>
<path d="M1918 1664L1912 1669.5L1918 1675" stroke="#606060" stroke-width="2.5" fill="none"/>
<path d="M2613 1663L2619 1669L2613 1675" stroke="#606060" stroke-width="2.5" fill="none"/>
<rect x="16" y="155" width="4" height="4" fill="#8d8672"/><rect x="16" y="155" width="2" height="2" fill="#d8d2c0"/>
<rect x="24" y="155" width="4" height="4" fill="#8d8672"/><rect x="24" y="155" width="2" height="2" fill="#d8d2c0"/>
<rect x="32" y="155" width="4" height="4" fill="#8d8672"/><rect x="32" y="155" width="2" height="2" fill="#d8d2c0"/>
<rect x="40" y="155" width="4" height="4" fill="#8d8672"/><rect x="40" y="155" width="2" height="2" fill="#d8d2c0"/>
<rect x="2691" y="155" width="4" height="4" fill="#8d8672"/><rect x="2691" y="155" width="2" height="2" fill="#d8d2c0"/>
<rect x="2699" y="155" width="4" height="4" fill="#8d8672"/><rect x="2699" y="155" width="2" height="2" fill="#d8d2c0"/>
<rect x="2707" y="155" width="4" height="4" fill="#8d8672"/><rect x="2707" y="155" width="2" height="2" fill="#d8d2c0"/>
<rect x="2715" y="155" width="4" height="4" fill="#8d8672"/><rect x="2715" y="155" width="2" height="2" fill="#d8d2c0"/>
<rect x="2691" y="337" width="4" height="4" fill="#8d8672"/><rect x="2691" y="337" width="2" height="2" fill="#d8d2c0"/>
<rect x="2699" y="337" width="4" height="4" fill="#8d8672"/><rect x="2699" y="337" width="2" height="2" fill="#d8d2c0"/>
<rect x="2707" y="337" width="4" height="4" fill="#8d8672"/><rect x="2707" y="337" width="2" height="2" fill="#d8d2c0"/>
<rect x="2715" y="337" width="4" height="4" fill="#8d8672"/><rect x="2715" y="337" width="2" height="2" fill="#d8d2c0"/>
<rect x="26" y="174" width="12" height="7" fill="none" stroke="#6d6258" stroke-width="2"/><rect x="22" y="180" width="12" height="8" fill="#e1e6f6" stroke="#6d6258" stroke-width="2"/>
<rect x="2701" y="174" width="12" height="7" fill="none" stroke="#6d6258" stroke-width="2"/><rect x="2697" y="180" width="12" height="8" fill="#e1e6f6" stroke="#6d6258" stroke-width="2"/>
<rect x="2701" y="355" width="12" height="7" fill="none" stroke="#6d6258" stroke-width="2"/><rect x="2697" y="361" width="12" height="8" fill="#e1e6f6" stroke="#6d6258" stroke-width="2"/>
<path d="M22 205V231M22 211H30M22 225H30" stroke="#5d6678" stroke-width="2" fill="none"/><rect x="29" y="207" width="10" height="10" fill="#c8742a"/><rect x="29" y="219" width="10" height="10" fill="#c8742a"/><path d="M34 207V229M29 212H39M29 224H39" stroke="#7a3a10" stroke-width="1"/>
<path d="M2690 204H2712Q2717 204 2717 210V214Q2714 220 2714 226Q2714 231 2718 234H2700" fill="#e8f2fa" stroke="#98a8c0" stroke-width="2"/><path d="M2690 204V219" stroke="#b0a070" stroke-width="2"/><path d="M2707 205V233M2700 218H2715" stroke="#b8c8e0" stroke-width="1.5"/><circle cx="2700" cy="212" r="5" fill="#e0202e"/><rect x="2689" y="219" width="14" height="16" fill="#d83040"/><path d="M2692.5 224L2699.5 231M2699.5 224L2692.5 231" stroke="#fff" stroke-width="2.2"/>
<text x="2694" y="264" font-family="Liberation Serif" font-size="23" font-weight="bold" font-style="italic" fill="#2060a8">@</text>
<path d="M2692 280H2706L2712 286V306H2692Z" fill="#f0f4fa" stroke="#a78c3c" stroke-width="2"/><path d="M2706 280V286H2712" fill="#e0cc88"/><path d="M2701 285Q2697 285 2697 289Q2697 292 2695 293Q2697 294 2697 297Q2697 301 2701 301" stroke="#2a5a98" stroke-width="2" fill="none"/><path d="M2701 292H2707M2701 296H2707" stroke="#2a5a98" stroke-width="2"/><path d="M2703 300H2710V296L2718 303L2710 310V306H2703Z" fill="#fbe08a" stroke="#c8841e" stroke-width="1.6" stroke-linejoin="round"/>
<g transform="translate(2692,387)"><path d="M1 1H15L21 7V27H1Z" fill="#f4f7fb" stroke="#a78c3c" stroke-width="2"/><path d="M15 1V7H21" fill="#e8d28a" stroke="#c8b060" stroke-width="1"/><path d="M13 9V19Q13 23 9 23Q6 23 5 21" stroke="#3a6ea5" stroke-width="3.2" fill="none"/></g>
<path d="M1972.5 1733V1692.5H2039" stroke="#dcdcdc" stroke-width="1.2" fill="none"/><path d="M1972 1734H2040V1692" stroke="#999" stroke-width="2" fill="none"/>
<rect x="1996" y="1708" width="14" height="17" rx="2" fill="#dff4fc" stroke="#6a9ad0" stroke-width="2.4"/><rect x="1998.5" y="1711" width="9" height="11" fill="#fff" stroke="#98a4b8" stroke-width="1"/><rect x="1998" y="1726" width="3" height="3" fill="#6a90c0"/><rect x="1994" y="1728.5" width="12" height="2.2" fill="#6a90c0"/>
<circle cx="1989" cy="1721" r="7.6" fill="#eae89a" stroke="#8aa0c8" stroke-width="1.8"/><circle cx="1989" cy="1721" r="2.4" fill="#fff" stroke="#a8b4d8" stroke-width="1.4"/><path d="M1984 1716L1996 1726" stroke="#fffbe0" stroke-width="2" opacity="0.7"/>
<path d="M1983 1717Q1982 1708 1989 1706V1702L1997 1708L1990 1714V1711Q1986 1711 1986 1716Z" fill="#fcd860" stroke="#c08a10" stroke-width="1.6" stroke-linejoin="round"/>
<rect x="2044.0" y="1704.0" width="4" height="4" fill="#8d8672"/><rect x="2044.0" y="1704.0" width="2" height="2" fill="#d8d2c0"/><rect x="2044.0" y="1711.5" width="4" height="4" fill="#8d8672"/><rect x="2044.0" y="1711.5" width="2" height="2" fill="#d8d2c0"/><rect x="2044.0" y="1719.0" width="4" height="4" fill="#8d8672"/><rect x="2044.0" y="1719.0" width="2" height="2" fill="#d8d2c0"/><rect x="2044.0" y="1726.5" width="4" height="4" fill="#8d8672"/><rect x="2044.0" y="1726.5" width="2" height="2" fill="#d8d2c0"/>
<rect x="2688.0" y="1705.0" width="4" height="4" fill="#8d8672"/><rect x="2688.0" y="1705.0" width="2" height="2" fill="#d8d2c0"/><rect x="2688.0" y="1712.5" width="4" height="4" fill="#8d8672"/><rect x="2688.0" y="1712.5" width="2" height="2" fill="#d8d2c0"/><rect x="2688.0" y="1720.0" width="4" height="4" fill="#8d8672"/><rect x="2688.0" y="1720.0" width="2" height="2" fill="#d8d2c0"/><rect x="2688.0" y="1727.5" width="4" height="4" fill="#8d8672"/><rect x="2688.0" y="1727.5" width="2" height="2" fill="#d8d2c0"/>
<path d="M2716 1704A8 8 0 0 1 2724 1712Q2724 1716 2720 1722H2712Q2708 1716 2708 1712A8 8 0 0 1 2716 1704Z" fill="#fff8c8" stroke="#f0a818" stroke-width="2"/><rect x="2712" y="1723" width="9" height="9" fill="#8898b0"/></svg>
</body></html>
